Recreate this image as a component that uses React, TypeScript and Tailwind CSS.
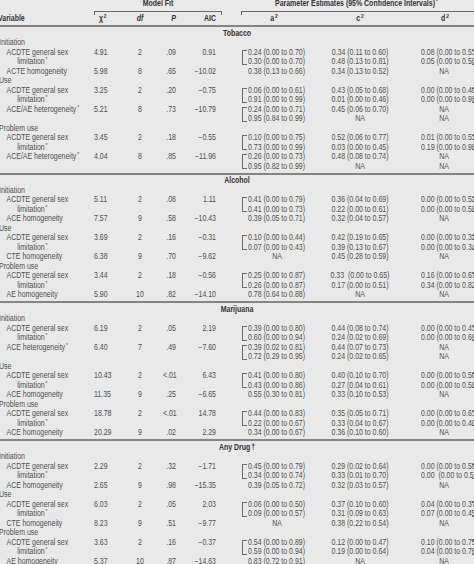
import React from 'react'

type Entry = {
  name: string
  limit?: boolean
  mark?: boolean
  chi: string
  df: string
  p: string
  aic: string
  a: string[]
  c: string[]
  d: string[]
}

type Group = { label: string; entries: Entry[] }
type Section = { title: string; mark?: boolean; groups: Group[] }

const acdte = (chi: string, df: string, p: string, aic: string, a: string[], c: string[], d: string[]): Entry => ({
  name: 'ACDTE general sex',
  limit: true,
  chi, df, p, aic, a, c, d,
})

const one = (name: string, chi: string, df: string, p: string, aic: string, a: string, c: string, d: string): Entry => ({
  name, chi, df, p, aic, a: [a], c: [c], d: [d],
})

const sections: Section[] = [
  {
    title: 'Tobacco',
    groups: [
      {
        label: 'Initiation',
        entries: [
          acdte('4.91', '2', '.09', '0.91', ['0.24 (0.00 to 0.70)', '0.30 (0.00 to 0.70)'], ['0.34 (0.11 to 0.60)', '0.48 (0.13 to 0.81)'], ['0.08 (0.00 to 0.53)', '0.05 (0.00 to 0.50)']),
          one('ACTE homogeneity', '5.98', '8', '.65', '−10.02', '0.38 (0.13 to 0.66)', '0.34 (0.13 to 0.52)', 'NA'),
        ],
      },
      {
        label: 'Use',
        entries: [
          acdte('3.25', '2', '.20', '−0.75', ['0.06 (0.00 to 0.61)', '0.91 (0.00 to 0.99)'], ['0.43 (0.05 to 0.68)', '0.01 (0.00 to 0.46)'], ['0.00 (0.00 to 0.40)', '0.00 (0.00 to 0.98)']),
          { name: 'ACE/AE heterogeneity', mark: true, chi: '5.21', df: '8', p: '.73', aic: '−10.79', a: ['0.24 (0.00 to 0.71)', '0.95 (0.84 to 0.99)'], c: ['0.45 (0.06 to 0.70)', 'NA'], d: ['NA', 'NA'] },
        ],
      },
      {
        label: 'Problem use',
        entries: [
          acdte('3.45', '2', '.18', '−0.55', ['0.10 (0.00 to 0.75)', '0.73 (0.00 to 0.99)'], ['0.52 (0.06 to 0.77)', '0.03 (0.00 to 0.45)'], ['0.01 (0.00 to 0.51)', '0.19 (0.00 to 0.98)']),
          { name: 'ACE/AE heterogeneity', mark: true, chi: '4.04', df: '8', p: '.85', aic: '−11.96', a: ['0.26 (0.00 to 0.73)', '0.95 (0.82 to 0.99)'], c: ['0.48 (0.08 to 0.74)', 'NA'], d: ['NA', 'NA'] },
        ],
      },
    ],
  },
  {
    title: 'Alcohol',
    groups: [
      {
        label: 'Initiation',
        entries: [
          acdte('5.11', '2', '.08', '1.11', ['0.41 (0.00 to 0.79)', '0.41 (0.00 to 0.73)'], ['0.36 (0.04 to 0.69)', '0.22 (0.00 to 0.61)'], ['0.00 (0.00 to 0.52)', '0.00 (0.00 to 0.58)']),
          one('ACE homogeneity', '7.57', '9', '.58', '−10.43', '0.39 (0.05 to 0.71)', '0.32 (0.04 to 0.57)', 'NA'),
        ],
      },
      {
        label: 'Use',
        entries: [
          acdte('3.69', '2', '.16', '−0.31', ['0.10 (0.00 to 0.44)', '0.07 (0.00 to 0.43)'], ['0.42 (0.19 to 0.65)', '0.39 (0.13 to 0.67)'], ['0.00 (0.00 to 0.32)', '0.00 (0.00 to 0.34)']),
          one('CTE homogeneity', '6.38', '9', '.70', '−9.62', 'NA', '0.45 (0.28 to 0.59)', 'NA'),
        ],
      },
      {
        label: 'Problem use',
        entries: [
          acdte('3.44', '2', '.18', '−0.56', ['0.25 (0.00 to 0.87)', '0.26 (0.00 to 0.87)'], ['0.33  (0.00 to 0.65)', '0.17 (0.00 to 0.51)'], ['0.16 (0.00 to 0.67)', '0.34 (0.00 to 0.82)']),
          one('AE homogeneity', '5.90', '10', '.82', '−14.10', '0.78 (0.64 to 0.88)', 'NA', 'NA'),
        ],
      },
    ],
  },
  {
    title: 'Marijuana',
    groups: [
      {
        label: 'Initiation',
        entries: [
          acdte('6.19', '2', '.05', '2.19', ['0.39 (0.00 to 0.80)', '0.60 (0.00 to 0.94)'], ['0.44 (0.08 to 0.74)', '0.24 (0.02 to 0.69)'], ['0.00 (0.00 to 0.43)', '0.00 (0.00 to 0.68)']),
          { name: 'ACE heterogeneity', mark: true, chi: '6.40', df: '7', p: '.49', aic: '−7.60', a: ['0.39 (0.02 to 0.81)', '0.72 (0.29 to 0.95)'], c: ['0.44 (0.07 to 0.73)', '0.24 (0.02 to 0.65)'], d: ['NA', 'NA'] },
        ],
      },
      {
        label: 'Use',
        entries: [
          acdte('10.43', '2', '<.01', '6.43', ['0.41 (0.00 to 0.80)', '0.43 (0.00 to 0.86)'], ['0.40 (0.10 to 0.70)', '0.27 (0.04 to 0.61)'], ['0.00 (0.00 to 0.50)', '0.00 (0.00 to 0.58)']),
          one('ACE homogeneity', '11.35', '9', '.25', '−6.65', '0.55 (0.30 to 0.81)', '0.33 (0.10 to 0.53)', 'NA'),
        ],
      },
      {
        label: 'Problem use',
        entries: [
          acdte('18.78', '2', '<.01', '14.78', ['0.44 (0.00 to 0.83)', '0.22 (0.00 to 0.67)'], ['0.35 (0.05 to 0.71)', '0.33 (0.04 to 0.67)'], ['0.00 (0.00 to 0.63)', '0.00 (0.00 to 0.40)']),
          one('ACE homogeneity', '20.29', '9', '.02', '2.29', '0.34 (0.00 to 0.67)', '0.36 (0.10 to 0.60)', 'NA'),
        ],
      },
    ],
  },
  {
    title: 'Any Drug',
    mark: true,
    groups: [
      {
        label: 'Initiation',
        entries: [
          acdte('2.29', '2', '.32', '−1.71', ['0.45 (0.00 to 0.79)', '0.34 (0.00 to 0.74)'], ['0.29 (0.02 to 0.64)', '0.33 (0.01 to 0.70)'], ['0.00 (0.00 to 0.58)', '0.00  (0.00 to 0.53)']),
          one('ACE homogeneity', '2.65', '9', '.98', '−15.35', '0.39 (0.05 to 0.72)', '0.32 (0.03 to 0.57)', 'NA'),
        ],
      },
      {
        label: 'Use',
        entries: [
          acdte('6.03', '2', '.05', '2.03', ['0.06 (0.00 to 0.50)', '0.09 (0.00 to 0.57)'], ['0.37 (0.10 to 0.60)', '0.31 (0.09 to 0.63)'], ['0.04 (0.00 to 0.37)', '0.07 (0.00 to 0.45)']),
          one('CTE homogeneity', '8.23', '9', '.51', '−9.77', 'NA', '0.38 (0.22 to 0.54)', 'NA'),
        ],
      },
      {
        label: 'Problem use',
        entries: [
          acdte('3.63', '2', '.16', '−0.37', ['0.54 (0.00 to 0.89)', '0.59 (0.00 to 0.94)'], ['0.12 (0.00 to 0.47)', '0.19 (0.00 to 0.64)'], ['0.10 (0.00 to 0.75)', '0.04 (0.00 to 0.76)']),
          one('AE homogeneity', '5.37', '10', '.87', '−14.63', '0.83 (0.72 to 0.91)', 'NA', 'NA'),
        ],
      },
    ],
  },
]

const cols = 'grid grid-cols-[94px_26px_40px_16px_40px_26px_74px_88px_80px]'
// the printed table uses a condensed face; squeeze each line horizontally
const line = 'h-[9.5px] leading-[9.5px] whitespace-pre scale-x-[0.82]'
const left = `${line} origin-left`
const center = `${line} origin-center text-center`
const right = `${line} origin-right text-right`

function Mark({ children }: { children: React.ReactNode }) {
  return <span className="relative -top-[3px] ml-[1px] text-[6px] leading-none">{children}</span>
}

function Bracket({ right: r = false }: { right?: boolean }) {
  return (
    <div
      className={`mt-[2px] h-[15px] shrink-0 border-y border-[#6b6b6b] ${
        r ? 'w-[3px] border-r' : 'w-[5px] border-l'
      }`}
    />
  )
}

function EntryRow({ e }: { e: Entry }) {
  const pair = e.a.length > 1
  const rightBracket = e.d.length > 1 && e.d[0] !== 'NA'
  return (
    <div className={cols}>
      <div>
        <div className={`${left} pl-[8px]`}>
          {e.name}
          {e.mark && <Mark>*</Mark>}
        </div>
        {e.limit && (
          <div className={`${left} pl-[21px]`}>
            limitation<Mark>*</Mark>
          </div>
        )}
      </div>
      <div className={left}>{e.chi}</div>
      <div className={center}>{e.df}</div>
      <div className={right}>{e.p}</div>
      <div className={right}>{e.aic}</div>
      <div />
      <div className="flex">
        {pair ? <Bracket /> : <div className="w-[5px] shrink-0" />}
        <div className="ml-[1px] w-[58px]">
          {e.a.map((v, i) => (
            <div key={i} className={v === 'NA' ? center : left}>
              {v}
            </div>
          ))}
        </div>
      </div>
      <div>
        {e.c.map((v, i) => (
          <div key={i} className={center}>
            {v}
          </div>
        ))}
      </div>
      <div className="flex pl-[12px]">
        <div className="w-[56px]">
          {e.d.map((v, i) => (
            <div key={i} className={center}>
              {v}
            </div>
          ))}
        </div>
        {rightBracket && <Bracket right />}
      </div>
    </div>
  )
}

function Rule() {
  return <div className="my-[1.5px] h-[2px] w-full bg-[#858585]" />
}

export default function App() {
  return (
    <div className="h-[564px] w-[474px] overflow-hidden bg-[#e9e9e9] font-['Liberation_Sans',Arial,sans-serif] text-[8.5px] text-[#4f4f4f]">
      <div className="w-[484px]">
        {/* column group headings */}
        <div className="flex h-[14.75px] font-bold text-[#333]">
          <div className="w-[94px] shrink-0" />
          <div className="flex w-[128px] shrink-0 flex-col">
            <div className="h-[12px] origin-center scale-x-[0.82] text-center leading-[6px]">Model Fit</div>
            <div className="h-[4px] border-x border-t border-[#6b6b6b]" />
          </div>
          <div className="w-[19px] shrink-0" />
          <div className="flex w-[243px] shrink-0 flex-col">
            <div className="h-[12px] origin-center scale-x-[0.82] pr-[15px] text-center leading-[6px]">
              Parameter Estimates (95% Confidence Intervals)<Mark>*</Mark>
            </div>
            <div className="h-[4px] border-x border-t border-[#6b6b6b]" />
          </div>
        </div>

        <div className={`${cols} -mt-[0.5px] font-bold text-[#333]`}>
          <div className={`${left} -ml-[2px]`}>Variable</div>
          <div className={`${left} pl-[6px]`}>
            χ<Mark>2</Mark>
          </div>
          <div className={`${center} italic`}>df</div>
          <div className={`${right} italic`}>P</div>
          <div className={right}>AIC</div>
          <div />
          <div className="flex">
            <div className="w-[6px]" />
            <div className={`${center} w-[52px]`}>
              a<Mark>2</Mark>
            </div>
          </div>
          <div className={center}>
            c<Mark>2</Mark>
          </div>
          <div className="flex pl-[12px]">
            <div className={`${center} w-[58px]`}>
              d<Mark>2</Mark>
            </div>
          </div>
        </div>
        <Rule />

        {sections.map((s, si) => (
          <div key={s.title}>
            {si > 0 && <Rule />}
            <div className="mt-[0.5px] w-[474px]">
              <div className={`${center} font-bold text-[#333]`}>
                {s.title}
                {s.mark && <span className="ml-[1px]">†</span>}
              </div>
            </div>
            {s.groups.map((g) => (
              <div key={g.label}>
                <div className={`${left} -ml-[1px]`}>{g.label}</div>
                {g.entries.map((e, i) => (
                  <EntryRow key={i} e={e} />
                ))}
              </div>
            ))}
          </div>
        ))}
      </div>
    </div>
  )
}
